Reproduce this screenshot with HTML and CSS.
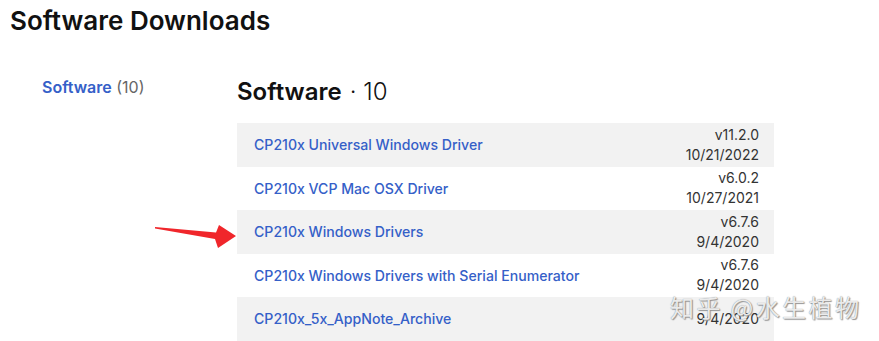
FILE: index.html
```html
<!DOCTYPE html>
<html lang="en">
<head>
    <meta charset="UTF-8">
    <title>Software Downloads</title>
    <link rel="stylesheet" href="styles.css">
</head>
<body>
    <h1 class="page-title">Software Downloads</h1>

    <div class="downloads">
        <nav class="side-nav">
            <a class="nav-link" href="#">Software</a> <span class="nav-count">(10)</span>
        </nav>

        <section class="doc-list">
            <h2 class="list-title">Software <span class="list-count">· 10</span></h2>

            <div class="doc-row">
                <a class="doc-name" href="#">CP210x Universal Windows Driver</a>
                <div class="doc-meta"><span>v11.2.0</span><span>10/21/2022</span></div>
            </div>
            <div class="doc-row">
                <a class="doc-name" href="#">CP210x VCP Mac OSX Driver</a>
                <div class="doc-meta"><span>v6.0.2</span><span>10/27/2021</span></div>
            </div>
            <div class="doc-row">
                <a class="doc-name" href="#">CP210x Windows Drivers</a>
                <div class="doc-meta"><span>v6.7.6</span><span>9/4/2020</span></div>
            </div>
            <div class="doc-row">
                <a class="doc-name" href="#">CP210x Windows Drivers with Serial Enumerator</a>
                <div class="doc-meta"><span>v6.7.6</span><span>9/4/2020</span></div>
            </div>
            <div class="doc-row">
                <a class="doc-name" href="#">CP210x_5x_AppNote_Archive</a>
                <div class="doc-meta"><span>9/4/2020</span></div>
            </div>
        </section>
    </div>

    <!-- annotation arrow pointing at the Windows driver row -->
    <svg class="arrow" width="90" height="40" viewBox="0 0 90 40">
        <polygon points="5,12 66,17.5 69,10 86,21 68,33 65,24 5,13.5" fill="#f0262b" />
    </svg>

    <div class="watermark">知乎 @水生植物</div>
</body>
</html>
```

FILE: styles.css
```css
* {
    box-sizing: border-box;
    margin: 0;
    padding: 0;
}

body {
    font-family: Inter, "Noto Sans", sans-serif;
    background: #ffffff;
    color: #1a1a1a;
    position: relative;
    width: 879px;
    height: 341px;
    overflow: hidden;
}

a {
    text-decoration: none;
}

.page-title {
    font-size: 26px;
    font-weight: 600;
    line-height: 32px;
    padding: 5px 0 0 10px;
    color: #111;
}

.downloads {
    display: flex;
    padding-top: 40px;
}

.side-nav {
    width: 237px;
    padding-left: 42px;
    font-size: 16px;
    line-height: 20px;
}

.nav-link {
    color: #3560c8;
    font-weight: 600;
}

.nav-count {
    color: #666;
}

.doc-list {
    width: 537px;
}

.list-title {
    font-size: 24px;
    font-weight: 600;
    line-height: 30px;
    color: #111;
    margin-bottom: 16px;
}

.list-count {
    font-weight: 300;
    margin-left: 2px;
}

.doc-row {
    display: flex;
    align-items: center;
    justify-content: space-between;
    height: 43.5px;
    padding: 0 15px 0 17px;
}

.doc-row:nth-child(even) {
    background: #f2f2f2;
}

.doc-name {
    color: #3560c8;
    font-size: 14.1px;
    font-weight: 500;
}

.doc-meta {
    display: flex;
    flex-direction: column;
    align-items: flex-end;
    font-size: 14px;
    line-height: 20px;
    color: #333;
}

.arrow {
    position: absolute;
    left: 150px;
    top: 215px;
}

.watermark {
    position: absolute;
    left: 670px;
    top: 289px;
    font-family: "Noto Sans CJK SC", sans-serif;
    font-size: 24px;
    color: rgba(255, 255, 255, 0.85);
    text-shadow: 0 0 1px #777, 1px 1px 1px #999;
    letter-spacing: 2.4px;
}
```
